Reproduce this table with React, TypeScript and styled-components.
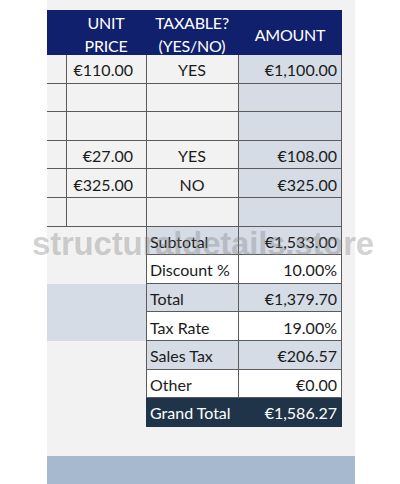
import React from "react";
import styled, { createGlobalStyle } from "styled-components";

const Global = createGlobalStyle`
  html, body { margin: 0; padding: 0; background: #ffffff; }
  * { box-sizing: border-box; }
`;

const LINE = "#5b5b5b";
const NAVY = "#11206d";
const BLUE = "#d5dce5";
const GRAY = "#f2f2f2";
const DARK = "#203449";

const Page = styled.div`
  position: relative;
  width: 400px;
  height: 484px;
  display: flex;
  background: #ffffff;
  font-family: Lato, "Open Sans", sans-serif;
  color: #1b1b1b;
  overflow: hidden;
`;

const Sheet = styled.div`
  margin-left: 47px;
  width: 308px;
  height: 484px;
  background: ${GRAY};
  display: flex;
  flex-direction: column;
  padding-top: 10px;
`;

const Table = styled.div`
  display: flex;
  flex-direction: column;
  width: 295px;
`;

const HeaderRow = styled.div`
  display: grid;
  grid-template-columns: 19px 80px 92px 104px;
  height: 45px;
  background: ${NAVY};
  color: #ffffff;
`;

const HeaderCell = styled.div`
  display: flex;
  flex-direction: column;
  align-items: center;
  justify-content: center;
  padding-top: 1px;
  font-size: 16px;
  line-height: 23px;
  letter-spacing: -0.2px;
`;

const Row = styled.div<{ $cols: string }>`
  display: grid;
  grid-template-columns: ${(p) => p.$cols};
  height: 28.6px;
`;

const Cell = styled.div<{
  $bg?: string;
  $align?: "left" | "center" | "right";
  $pr?: number;
  $left?: boolean;
  $right?: boolean;
  $bottom?: boolean;
  $color?: string;
  $line?: string;
}>`
  display: flex;
  align-items: center;
  justify-content: ${(p) =>
    p.$align === "right" ? "flex-end" : p.$align === "center" ? "center" : "flex-start"};
  padding: 3px ${(p) => p.$pr ?? 4}px 0 3px;
  background: ${(p) => p.$bg ?? "transparent"};
  color: ${(p) => p.$color ?? "#1b1b1b"};
  font-size: 16px;
  line-height: 16px;
  white-space: nowrap;
  border-left: ${(p) => (p.$left ? `1px solid ${p.$line ?? LINE}` : "none")};
  border-right: ${(p) => (p.$right ? `1px solid ${p.$line ?? LINE}` : "none")};
  border-bottom: ${(p) => (p.$bottom ? `1px solid ${p.$line ?? LINE}` : "none")};
`;

const Spacer = styled.div`
  flex: 1;
`;

const BottomBand = styled.div`
  height: 28px;
  background: #a6b9ce;
`;

const Watermark = styled.div`
  position: absolute;
  left: 32px;
  top: 227px;
  font-family: "Liberation Sans", Arial, sans-serif;
  font-weight: bold;
  font-size: 33px;
  line-height: 33px;
  letter-spacing: -0.2px;
  color: rgba(128, 128, 128, 0.36);
  pointer-events: none;
  white-space: nowrap;
`;

type Item = { price: string; taxable: string; amount: string };

const items: Item[] = [
  { price: "€110.00", taxable: "YES", amount: "€1,100.00" },
  { price: "", taxable: "", amount: "" },
  { price: "", taxable: "", amount: "" },
  { price: "€27.00", taxable: "YES", amount: "€108.00" },
  { price: "€325.00", taxable: "NO", amount: "€325.00" },
  { price: "", taxable: "", amount: "" },
];

type Sum = { label: string; value: string; tone: "blue" | "white"; side?: boolean };

const summary: Sum[] = [
  { label: "Subtotal", value: "€1,533.00", tone: "blue" },
  { label: "Discount %", value: "10.00%", tone: "white" },
  { label: "Total", value: "€1,379.70", tone: "blue", side: true },
  { label: "Tax Rate", value: "19.00%", tone: "white", side: true },
  { label: "Sales Tax", value: "€206.57", tone: "blue" },
  { label: "Other", value: "€0.00", tone: "white" },
];

const ITEM_COLS = "19px 80px 92px 104px";
const SUM_COLS = "99px 92px 104px";

export default function App() {
  return (
    <Page>
      <Global />
      <Sheet>
        <Table>
          <HeaderRow>
            <HeaderCell />
            <HeaderCell>
              <span>UNIT</span>
              <span>PRICE</span>
            </HeaderCell>
            <HeaderCell>
              <span>TAXABLE?</span>
              <span>(YES/NO)</span>
            </HeaderCell>
            <HeaderCell>
              <span>AMOUNT</span>
            </HeaderCell>
          </HeaderRow>
          {items.map((it, i) => (
            <Row key={i} $cols={ITEM_COLS}>
              <Cell $bottom />
              <Cell $left $bottom $align="right" $pr={13}>
                {it.price}
              </Cell>
              <Cell $left $bottom $align="center">
                {it.taxable}
              </Cell>
              <Cell $left $bottom $right $bg={BLUE} $align="right" $pr={4}>
                {it.amount}
              </Cell>
            </Row>
          ))}
          {summary.map((s) => {
            const bg = s.tone === "blue" ? BLUE : "#ffffff";
            return (
              <Row key={s.label} $cols={SUM_COLS}>
                <Cell $bg={s.side ? BLUE : "transparent"} />
                <Cell $left $bottom $bg={bg}>
                  {s.label}
                </Cell>
                <Cell $left $bottom $right $bg={bg} $align="right">
                  {s.value}
                </Cell>
              </Row>
            );
          })}
          <Row $cols={SUM_COLS}>
            <Cell />
            <Cell $left $bottom $bg={DARK} $color="#ffffff" $line={DARK}>
              Grand Total
            </Cell>
            <Cell $bottom $right $bg={DARK} $color="#ffffff" $align="right" $line={DARK}>
              €1,586.27
            </Cell>
          </Row>
        </Table>
        <Spacer />
        <BottomBand />
      </Sheet>
      <Watermark>structuraldetails.store</Watermark>
    </Page>
  );
}
